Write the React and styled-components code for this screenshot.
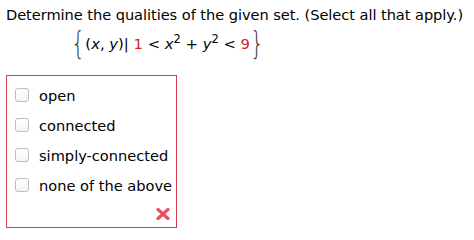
import styled, { createGlobalStyle } from "styled-components";

const Global = createGlobalStyle`
    body {
        margin: 0;
        background: #fff;
        font-family: "DejaVu Sans", Verdana, sans-serif;
        color: #000;
    }
`

const Page = styled.div`
    width: 474px;
    height: 240px;
    padding: 6px 0 0 6px;
    box-sizing: border-box;
`

const Prompt = styled.div`
    font-size: 14.6px;
    line-height: 18px;
    white-space: nowrap;
    letter-spacing: -0.05px;
`

const Formula = styled.div`
    margin: 0 0 0 65px;
    height: 40px;
    line-height: 40px;
    font-size: 14.8px;
    white-space: pre;
`

const Brace = styled.span`
    display: inline-block;
    vertical-align: middle;
    font-weight: 200;
    font-size: 32px;
    line-height: 32px;
    color: #444;
    transform: scaleX(0.7) translateY(-2px);
    margin: 0 -3px;
`

const Red = styled.span`
    color: #d9241c;
`

const Var = styled.i`
    font-style: italic;
`

const Sup = styled.sup`
    font-size: 11.5px;
    vertical-align: 6px;
    line-height: 0;
`

const Box = styled.div`
    width: 171px;
    height: 153px;
    margin-top: 11px;
    box-sizing: border-box;
    border: 1.5px solid #d33c47;
    padding: 4px 0 0 8px;
    position: relative;
`

const Row = styled.label`
    display: flex;
    align-items: center;
    height: 30px;
    gap: 10px;
    font-size: 14.6px;
`

const Check = styled.span`
    width: 12px;
    height: 12px;
    border: 1px solid #bdbdbd;
    border-radius: 3px;
    background: linear-gradient(#fff, #f4f4f4);
    flex: none;
`

const Wrong = styled.svg`
    position: absolute;
    right: 6px;
    bottom: 7px;
`

const options = ["open", "connected", "simply-connected", "none of the above"];

const App = () => {
    return (
        <Page>
            <Global />
            <Prompt>Determine the qualities of the given set. (Select all that apply.)</Prompt>
            <Formula>
                <Brace>{"{"}</Brace>
                {"("}<Var>x</Var>{", "}<Var>y</Var>{")| "}<Red>1</Red>{" < "}<Var>x</Var><Sup>2</Sup>{" + "}<Var>y</Var><Sup>2</Sup>{" < "}<Red>9</Red>
                <Brace>{"}"}</Brace>
            </Formula>
            <Box>
                {options.map((o) => (
                    <Row key={o}>
                        <Check />
                        {o}
                    </Row>
                ))}
                <Wrong width="14" height="12" viewBox="0 0 14 12">
                    <path d="M2 1.5 L12 10.5 M12 1.5 L2 10.5" stroke="#e9505c" strokeWidth="3.2" strokeLinecap="round" />
                </Wrong>
            </Box>
        </Page>
    );
}

export default App;
